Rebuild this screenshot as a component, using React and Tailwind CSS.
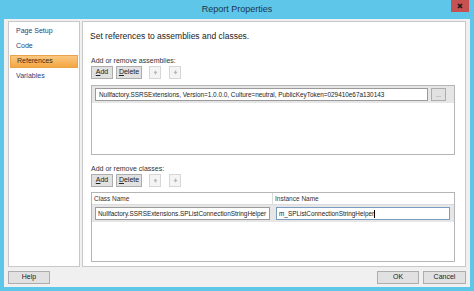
import { useState } from "react";

function Btn({ children, className = "" }) {
  return (
    <div
      className={`h-[13px] flex items-center justify-center border border-[#adadad] bg-[#e1e1e1] text-[7px] text-[#222] ${className}`}
    >
      {children}
    </div>
  );
}

function ArrowBtn({ up }) {
  return (
    <div className="w-[12px] h-[13px] flex items-center justify-center border border-[#d6d6d6] bg-[#f4f4f4]">
      <svg width="5" height="5" viewBox="0 0 5 5">
        {up ? (
          <path d="M2.5 0.5 L4.5 3 H3.2 V4.5 H1.8 V3 H0.5 Z" fill="#b8b8b8" />
        ) : (
          <path d="M2.5 4.5 L4.5 2 H3.2 V0.5 H1.8 V2 H0.5 Z" fill="#b8b8b8" />
        )}
      </svg>
    </div>
  );
}

function Toolbar() {
  return (
    <div className="flex items-center h-[13px]">
      <Btn className="w-[22px]">
        <span className="underline">A</span>dd
      </Btn>
      <Btn className="w-[26px] ml-[3px]">
        <span className="underline">D</span>elete
      </Btn>
      <div className="ml-[7px]">
        <ArrowBtn up />
      </div>
      <div className="ml-[8px]">
        <ArrowBtn />
      </div>
    </div>
  );
}

export default function App() {
  const [nav] = useState(["Page Setup", "Code", "References", "Variables"]);
  const active = "References";

  return (
    <div className="w-[474px] h-[291px] bg-[#5ec7e9] flex flex-col px-[4px] pb-[4px] font-['Liberation_Sans',sans-serif] overflow-hidden">
      {/* title bar */}
      <div className="relative h-[19px] flex items-center justify-center">
        <span className="text-[9px] text-[#1b3550]">Report Properties</span>
        <div className="absolute right-[1px] top-0 w-[18px] h-[12px] bg-[#c75050] flex items-center justify-center">
          <svg width="6" height="6" viewBox="0 0 6 6">
            <path d="M1 1 L5 5 M5 1 L1 5" stroke="#1a1a1a" strokeWidth="1.6" />
          </svg>
        </div>
      </div>

      <div className="flex-1 bg-[#f0f0f0] flex flex-col">
        <div className="flex gap-[2px] px-[4px] pt-[2px] h-[248px]">
          {/* left nav */}
          <div className="w-[72px] border border-[#c8c8c8] bg-white pt-[2px] flex flex-col">
            {nav.map((n) =>
              n === active ? (
                <div
                  key={n}
                  className="h-[13px] my-[1px] mx-[1px] pl-[6px] flex items-center text-[7px] text-[#3a2a10] bg-gradient-to-b from-[#fbc77f] to-[#f4a640] border border-[#e8a24a]"
                >
                  {n}
                </div>
              ) : (
                <div
                  key={n}
                  className="h-[15px] pl-[7px] flex items-center text-[7px] text-[#1f3f7a]"
                >
                  {n}
                </div>
              )
            )}
          </div>

          {/* right panel */}
          <div className="flex-1 border border-[#c8c8c8] bg-white flex flex-col pl-[7px] pr-[10px]">
            <div className="pt-[8px] text-[8.5px] text-[#222] leading-[12px]">
              Set references to assemblies and classes.
            </div>
            <div className="mt-[14px] text-[7px] text-[#333] leading-[9px] pl-[1px]">
              Add or remove assemblies:
            </div>
            <div className="mt-[1px] pl-[1px]">
              <Toolbar />
            </div>
            <div className="mt-[6px] ml-[1px] h-[70px] border border-[#b5b5b5] bg-white">
              <div className="h-[17px] bg-[#e6e6e6] flex items-center px-[3px] gap-[3px]">
                <div className="flex-1 h-[13px] border border-[#9a9a9a] bg-white flex items-center pl-[3px] text-[6.4px] text-[#222] whitespace-nowrap overflow-hidden">
                  Nullfactory.SSRSExtensions, Version=1.0.0.0, Culture=neutral, PublicKeyToken=029410e67a130143
                </div>
                <div className="w-[15px] h-[13px] border border-[#adadad] bg-[#e1e1e1] flex items-center justify-center text-[6px] text-[#555] leading-none">
                  ...
                </div>
                <div className="w-[2px]" />
              </div>
            </div>

            <div className="mt-[9px] text-[7px] text-[#333] leading-[9px] pl-[1px]">
              Add or remove classes:
            </div>
            <div className="mt-[1px] pl-[1px]">
              <Toolbar />
            </div>
            <div className="mt-[5px] ml-[1px] h-[70px] border border-[#b5b5b5] bg-white flex flex-col">
              <div className="h-[12px] flex text-[6.5px] text-[#333] border-b border-[#dcdcdc]">
                <div className="w-[181px] border-r border-[#dcdcdc] pl-[2px] flex items-center">
                  Class Name
                </div>
                <div className="flex-1 pl-[2px] flex items-center">Instance Name</div>
              </div>
              <div className="h-[17px] bg-[#e6e6e6] flex items-center pl-[3px] pr-[4px]">
                <div className="w-[175px] h-[13px] border border-[#9a9a9a] bg-white flex items-center pl-[2px] text-[6.4px] text-[#222] whitespace-nowrap overflow-hidden">
                  Nullfactory.SSRSExtensions.SPListConnectionStringHelper
                </div>
                <div className="ml-[6px] flex-1 h-[13px] border border-[#7a9cc0] bg-white flex items-center pl-[2px] text-[6.4px] text-[#222] whitespace-nowrap overflow-hidden">
                  m_SPListConnectionStringHelper
                  <span className="inline-block w-[1px] h-[8px] bg-black" />
                </div>
              </div>
            </div>
          </div>
        </div>

        {/* footer */}
        <div className="flex-1 flex items-center justify-between px-[4px]">
          <Btn className="w-[42px] bg-[#e1e1e1]">Help</Btn>
          <div className="flex gap-[4px]">
            <Btn className="w-[42px]">OK</Btn>
            <Btn className="w-[43px]">Cancel</Btn>
          </div>
        </div>
      </div>
    </div>
  );
}
